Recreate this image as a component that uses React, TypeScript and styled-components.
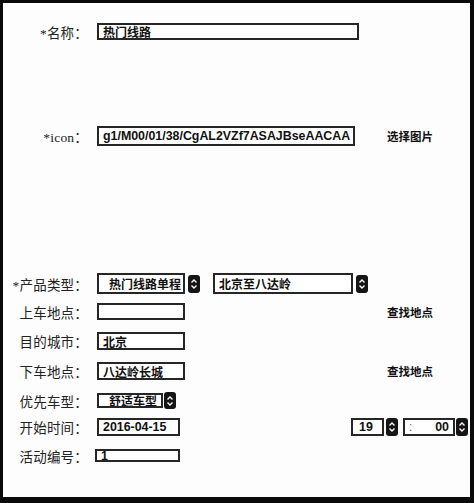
import React from 'react';
import styled, { createGlobalStyle } from 'styled-components';

const GlobalStyle = createGlobalStyle`
  html, body {
    margin: 0;
    padding: 0;
    background: #fff;
  }
`;

const Frame = styled.div`
  width: 474px;
  height: 503px;
  box-sizing: border-box;
  border-style: solid;
  border-color: #0a0a0a;
  border-width: 3px 4px 6px 3px;
  background: #fdfdfd;
  display: flex;
  flex-direction: column;
`;

const Row = styled.div<{ $gap: number }>`
  display: flex;
  align-items: center;
  height: 20px;
  margin-top: ${p => p.$gap}px;
`;

const Label = styled.div`
  width: 85px;
  flex: none;
  text-align: right;
  margin-right: 9px;
  font-family: "Liberation Serif", "Noto Sans CJK SC", serif;
  font-size: 13.5px;
  color: #222;
  white-space: nowrap;
  letter-spacing: 0.2px;
`;

const Field = styled.div<{ $w: number; $h: number; $align?: string; $pad?: number }>`
  width: ${p => p.$w}px;
  height: ${p => p.$h}px;
  flex: none;
  box-sizing: border-box;
  border: 2px solid #262626;
  background: #fff;
  display: flex;
  align-items: center;
  justify-content: ${p => p.$align || 'flex-start'};
  padding: 0 ${p => p.$pad ?? 4}px;
  overflow: hidden;
  white-space: nowrap;
  font-family: "Liberation Sans", "Noto Sans CJK SC", sans-serif;
  font-weight: 700;
  font-size: 12px;
  color: #111;
`;

const Mono = styled.span`
  font-size: 12.4px;
`;

const Stepper = styled.div<{ $h: number; $ml: number }>`
  width: 12px;
  height: ${p => p.$h}px;
  margin-left: ${p => p.$ml}px;
  flex: none;
  border-radius: 3px;
  background: #151515;
  display: flex;
  align-items: center;
  justify-content: center;
`;

const Action = styled.div<{ $mr: number }>`
  margin-left: auto;
  margin-right: ${p => p.$mr}px;
  font-family: "Noto Sans CJK SC", sans-serif;
  font-weight: 700;
  font-size: 11.5px;
  color: #111;
`;

const TimeGroup = styled.div`
  margin-left: auto;
  margin-right: 2px;
  display: flex;
  align-items: center;
`;

const Colon = styled.span`
  font-weight: 400;
  color: #666;
  margin-right: auto;
`;

const Spacer = styled.div<{ $w: number }>`
  width: ${p => p.$w}px;
  flex: none;
`;

const Arrows: React.FC = () => (
  <svg width="8" height="12" viewBox="0 0 8 12">
    <path d="M1.5 4.5 L4 2 L6.5 4.5" stroke="#fff" strokeWidth="1.4" fill="none" />
    <path d="M1.5 7.5 L4 10 L6.5 7.5" stroke="#fff" strokeWidth="1.4" fill="none" />
  </svg>
);

const App: React.FC = () => {
  return (
    <>
      <GlobalStyle />
      <Frame>
        <Row $gap={18.5}>
          <Label>*名称：</Label>
          <Field $w={262} $h={17}>热门线路</Field>
        </Row>

        <Row $gap={84.5}>
          <Label>*icon：</Label>
          <Field $w={258} $h={20}>
            <Mono>g1/M00/01/38/CgAL2VZf7ASAJBseAACAA</Mono>
          </Field>
          <Action $mr={37}>选择图片</Action>
        </Row>

        <Row $gap={127.5}>
          <Label>*产品类型：</Label>
          <Field $w={88} $h={21} $pad={10}>热门线路单程</Field>
          <Stepper $h={18} $ml={3}><Arrows /></Stepper>
          <Spacer $w={13} />
          <Field $w={140} $h={21}>北京至八达岭</Field>
          <Stepper $h={18} $ml={3}><Arrows /></Stepper>
        </Row>

        <Row $gap={8}>
          <Label>上车地点：</Label>
          <Field $w={88} $h={17} />
          <Action $mr={37}>查找地点</Action>
        </Row>

        <Row $gap={9.5}>
          <Label>目的城市：</Label>
          <Field $w={88} $h={18}>北京</Field>
        </Row>

        <Row $gap={10}>
          <Label>下车地点：</Label>
          <Field $w={88} $h={18}>八达岭长城</Field>
          <Action $mr={37}>查找地点</Action>
        </Row>

        <Row $gap={9.5}>
          <Label>优先车型：</Label>
          <Field $w={66} $h={15} $pad={10}>舒适车型</Field>
          <Stepper $h={17} $ml={1}><Arrows /></Stepper>
        </Row>

        <Row $gap={6.5}>
          <Label>开始时间：</Label>
          <Field $w={83} $h={18}>
            <Mono>2016-04-15</Mono>
          </Field>
          <TimeGroup>
            <Field $w={33} $h={18} $pad={6}><Mono>19</Mono></Field>
            <Stepper $h={18} $ml={2}><Arrows /></Stepper>
            <Field $w={52} $h={18} $pad={4} style={{ marginLeft: 5 }}>
              <Colon>:</Colon>
              <Mono>00</Mono>
            </Field>
            <Stepper $h={18} $ml={1}><Arrows /></Stepper>
          </TimeGroup>
        </Row>

        <Row $gap={8.5}>
          <Label>活动编号：</Label>
          <Field $w={85} $h={13} style={{ marginLeft: -2 }}>
            <Mono>1</Mono>
          </Field>
        </Row>
      </Frame>
    </>
  );
};

export default App;
